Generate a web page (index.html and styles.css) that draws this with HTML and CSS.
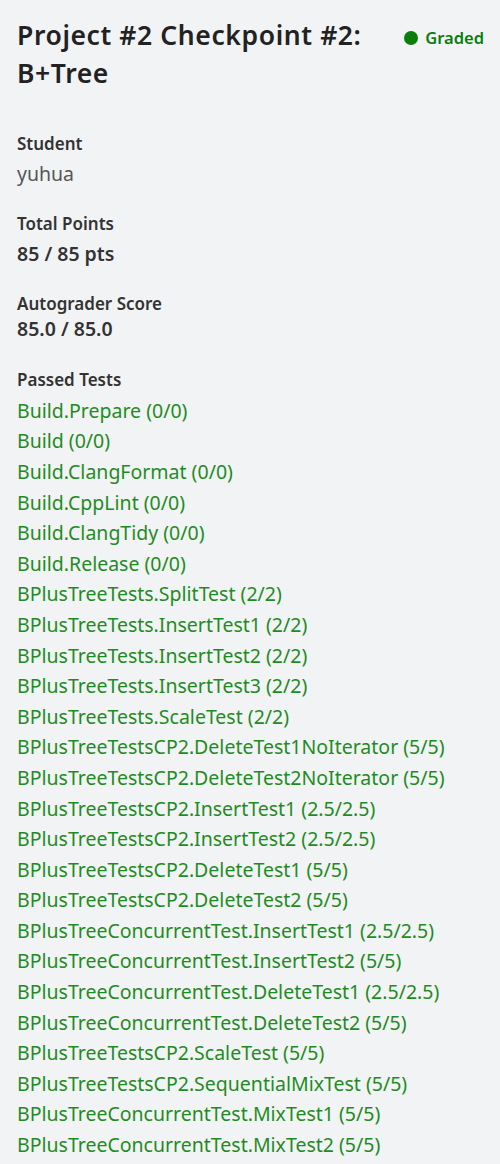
FILE: index.html
```html
<!DOCTYPE html>
<html>
<head>
<meta charset="utf-8">
<link rel="stylesheet" href="styles.css">
</head>
<body>
<main class="panel">
  <header class="head">
    <h1 class="title">Project #2 Checkpoint #2: B+Tree</h1>
    <div class="status"><span class="dot"></span>Graded</div>
  </header>
  <section class="field first">
    <div class="label">Student</div>
    <div class="value light">yuhua</div>
  </section>
  <section class="field">
    <div class="label">Total Points</div>
    <div class="value bold">85 / 85 pts</div>
  </section>
  <section class="field score">
    <div class="label">Autograder Score</div>
    <div class="value bold">85.0 / 85.0</div>
  </section>
  <section class="field tests">
    <div class="label">Passed Tests</div>
    <ul class="list">
      <li>Build.Prepare (0/0)</li>
      <li>Build (0/0)</li>
      <li>Build.ClangFormat (0/0)</li>
      <li>Build.CppLint (0/0)</li>
      <li>Build.ClangTidy (0/0)</li>
      <li>Build.Release (0/0)</li>
      <li>BPlusTreeTests.SplitTest (2/2)</li>
      <li>BPlusTreeTests.InsertTest1 (2/2)</li>
      <li>BPlusTreeTests.InsertTest2 (2/2)</li>
      <li>BPlusTreeTests.InsertTest3 (2/2)</li>
      <li>BPlusTreeTests.ScaleTest (2/2)</li>
      <li>BPlusTreeTestsCP2.DeleteTest1NoIterator (5/5)</li>
      <li>BPlusTreeTestsCP2.DeleteTest2NoIterator (5/5)</li>
      <li>BPlusTreeTestsCP2.InsertTest1 (2.5/2.5)</li>
      <li>BPlusTreeTestsCP2.InsertTest2 (2.5/2.5)</li>
      <li>BPlusTreeTestsCP2.DeleteTest1 (5/5)</li>
      <li>BPlusTreeTestsCP2.DeleteTest2 (5/5)</li>
      <li>BPlusTreeConcurrentTest.InsertTest1 (2.5/2.5)</li>
      <li>BPlusTreeConcurrentTest.InsertTest2 (5/5)</li>
      <li>BPlusTreeConcurrentTest.DeleteTest1 (2.5/2.5)</li>
      <li>BPlusTreeConcurrentTest.DeleteTest2 (5/5)</li>
      <li>BPlusTreeTestsCP2.ScaleTest (5/5)</li>
      <li>BPlusTreeTestsCP2.SequentialMixTest (5/5)</li>
      <li>BPlusTreeConcurrentTest.MixTest1 (5/5)</li>
      <li>BPlusTreeConcurrentTest.MixTest2 (5/5)</li>
    </ul>
  </section>
</main>
</body>
</html>
```
FILE: styles.css
```css
html, body {
  margin: 0;
  padding: 0;
  background: #f2f3f5;
}
body {
  font-family: "Noto Sans", "Open Sans", sans-serif;
  color: #333;
}
.panel {
  padding: 15.5px 16px 0 17px;
}
.head {
  display: flex;
  justify-content: space-between;
  align-items: flex-start;
  gap: 20px;
}
.title {
  margin: 0;
  flex: 1;
  font-size: 26.5px;
  font-weight: 600;
  line-height: 38.5px;
  letter-spacing: 0.6px;
  color: #222;
}
.status {
  display: flex;
  align-items: center;
  gap: 7px;
  margin-top: 12.8px;
  font-size: 16.5px;
  line-height: 20px;
  font-weight: 600;
  color: #0b7d0b;
  white-space: nowrap;
}
.dot {
  width: 14px;
  height: 14px;
  border-radius: 50%;
  background: #0b7d0b;
}
.field {
  margin-top: 21.3px;
}
.field.first {
  margin-top: 38.5px;
}
.field.score {
  margin-top: 21px;
}
.field.tests {
  margin-top: 22.5px;
}
.label {
  font-size: 17px;
  font-weight: 600;
  line-height: 26px;
  color: #333;
}
.value {
  margin-top: 1px;
  font-size: 19.5px;
  line-height: 32px;
}
.score .value {
  margin-top: -4.5px;
}
.light {
  color: #555;
}
.bold {
  font-weight: 600;
  color: #333;
}
.list {
  list-style: none;
  margin: 2.5px 0 0 0;
  padding: 0;
}
.list li {
  font-size: 19.5px;
  line-height: 30.6px;
  color: #1e8c22;
}
```
